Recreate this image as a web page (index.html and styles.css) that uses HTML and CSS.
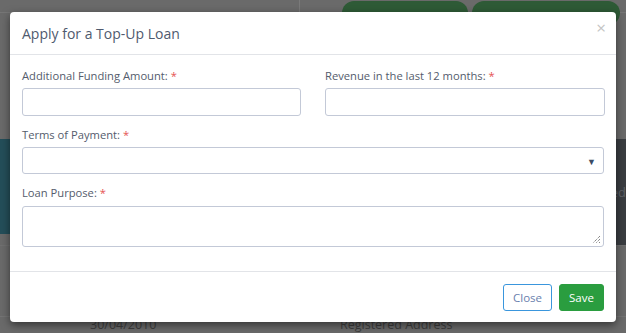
FILE: index.html
```html
<!DOCTYPE html>
<html>
<head>
<meta charset="utf-8">
<link rel="stylesheet" href="styles.css">
</head>
<body>
<div class="page">
  <div class="topbar">
    <div class="vline"></div>
    <span class="pill pill-a"></span>
    <span class="pill pill-b"></span>
  </div>
  <div class="zone1"></div>
  <div class="band">
    <div class="band-left"></div>
    <div class="band-right"><span class="band-text">Registered</span></div>
  </div>
  <div class="zone2"></div>
  <div class="bottomrow">
    <span class="cell-date">30/04/2010</span>
    <span class="cell-addr">Registered Address</span>
  </div>
</div>

<div class="modal">
  <div class="modal-header">
    <h5 class="modal-title">Apply for a Top-Up Loan</h5>
    <span class="close">&times;</span>
  </div>
  <div class="modal-body">
    <div class="row">
      <div class="group">
        <label class="lbl">Additional Funding Amount: <span class="req">*</span></label>
        <input class="ctl" type="text">
      </div>
      <div class="group">
        <label class="lbl">Revenue in the last 12 months: <span class="req">*</span></label>
        <input class="ctl" type="text">
      </div>
    </div>
    <div class="group">
      <label class="lbl">Terms of Payment: <span class="req">*</span></label>
      <div class="ctl select"><span class="caret">&#9660;</span></div>
    </div>
    <div class="group last">
      <label class="lbl">Loan Purpose: <span class="req">*</span></label>
      <div class="ctl textarea">
        <svg class="grip" width="9" height="9" viewBox="0 0 9 9"><path d="M8 1 L1 8 M8 4 L4 8 M8 7 L7 8" stroke="#555" stroke-width="1" stroke-dasharray="1 1" fill="none"/></svg>
      </div>
    </div>
  </div>
  <div class="modal-footer">
    <button class="btn btn-close">Close</button>
    <button class="btn btn-save">Save</button>
  </div>
</div>
</body>
</html>
```

FILE: styles.css
```css
* { box-sizing: border-box; }
html, body { margin: 0; padding: 0; }
body {
  width: 626px;
  height: 333px;
  overflow: hidden;
  background: #6a6a6a;
  font-family: "Open Sans", "Liberation Sans", sans-serif;
  position: relative;
}
.page { display: flex; flex-direction: column; height: 333px; }
.topbar { height: 12px; display: flex; position: relative; }
.vline { width: 300px; border-right: 1px solid #7a7a7a; }
.pill { height: 24px; margin-top: 1px; background: #2e5a36; border-radius: 12px; }
.pill-a { width: 126px; margin-left: 42px; }
.pill-b { width: 148px; margin-left: 4px; }
.zone1 { height: 127px; border-top: 1px solid #767676; }
.band { display: flex; align-items: flex-start; height: 106px; }
.band-left { width: 300px; height: 95px; background: #244e59; }
.band-right { flex: 1; height: 106px; background: #3a3d41; display: flex; align-items: center; padding-left: 314px; }
.band-text { color: #5e6166; font-size: 13px; }
.zone2 { flex: 1; border-top: 1px solid #707070; }
.bottomrow { height: 17px; flex: none; display: flex; font-size: 12.5px; line-height: 16px; color: #3e3e3e; border-top: 1px solid #747474; }
.cell-date { padding-left: 90px; width: 340px; }

.modal {
  position: absolute;
  left: 10px;
  top: 12px;
  width: 606px;
  height: 310px;
  background: #fff;
  border-radius: 4px;
  box-shadow: 0 3px 8px rgba(0,0,0,0.5);
  display: flex;
  flex-direction: column;
}
.modal-header {
  height: 43px;
  border-bottom: 1px solid #e2e4e8;
  display: flex;
  align-items: center;
  justify-content: space-between;
  padding: 0 12px;
}
.modal-title {
  margin: 0;
  font-size: 14px;
  font-weight: 400;
  color: #4f5a6e;
}
.close {
  font-size: 17px;
  color: #c4c4c4;
  margin-top: -12px;
  margin-right: -2px;
  line-height: 1;
}
.modal-body { padding: 12px 12px 15px; flex: 1; }
.row { display: grid; grid-template-columns: 279px 280px; column-gap: 24px; }
.group { display: flex; flex-direction: column; margin-bottom: 10px; }
.group.last { margin-bottom: 0; }
.lbl {
  font-size: 11.2px;
  line-height: 18px;
  height: 18px;
  color: #545c6c;
  margin-bottom: 3px;
}
.req { color: #e55353; }
.ctl {
  height: 28px;
  border: 1px solid #c3c9d7;
  border-radius: 3px;
  background: #fff;
  font: inherit;
  padding: 0 8px;
  margin: 0;
  outline: none;
}
.select { height: 27px; display: flex; align-items: center; justify-content: flex-end; padding-right: 7px; }
.caret { font-size: 9px; color: #3c4b64; margin-top: 1px; }
.textarea { height: 41px; position: relative; margin-top: 1px; }
.grip { position: absolute; right: 2px; bottom: 2px; }
.modal-footer {
  height: 51px;
  border-top: 1px solid #e2e4e8;
  display: flex;
  justify-content: flex-end;
  align-items: flex-start;
  padding: 12px 12px 0;
  gap: 7px;
}
.btn {
  height: 27px;
  font-family: inherit;
  font-size: 11.5px;
  border-radius: 3px;
  padding: 0 9px;
  cursor: pointer;
}
.btn-close { width: 49px; background: #fff; border: 1px solid #3a96dd; color: #6a7fae; }
.btn-save { width: 45px; background: #2a9d3f; border: 1px solid #2a9d3f; color: #fff; }
```
